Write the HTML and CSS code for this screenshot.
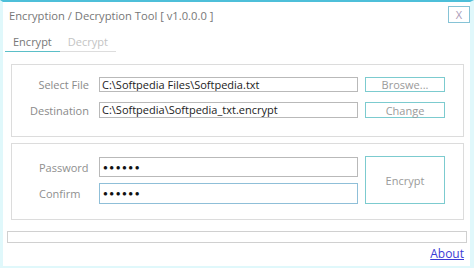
FILE: index.html
```html
<!DOCTYPE html>
<html lang="en">
<head>
  <meta charset="UTF-8">
  <title>Encryption / Decryption Tool</title>
  <link rel="stylesheet" href="styles.css">
</head>
<body>

<div class="window">

  <!-- Title Bar -->
  <div class="titlebar">
    <span class="title">Encryption / Decryption Tool [ v1.0.0.0 ]</span>
    <button class="close">X</button>
  </div>

  <!-- Tabs -->
  <div class="tabs">
    <span class="tab active">Encrypt</span>
    <span class="tab">Decrypt</span>
  </div>

  <!-- File Group -->
  <div class="group files">
    <label class="label">Select File</label>
    <div class="field">C:\Softpedia Files\Softpedia.txt</div>
    <button class="btn">Broswe...</button>

    <label class="label">Destination</label>
    <div class="field">C:\Softpedia\Softpedia_txt.encrypt</div>
    <button class="btn">Change</button>
  </div>

  <!-- Password Group -->
  <div class="group secret">
    <label class="label">Password</label>
    <div class="field dots">&#9679;&#9679;&#9679;&#9679;&#9679;&#9679;</div>
    <button class="btn big">Encrypt</button>

    <label class="label">Confirm</label>
    <div class="field dots focus">&#9679;&#9679;&#9679;&#9679;&#9679;&#9679;</div>
  </div>

  <!-- Progress -->
  <div class="progress"></div>

  <div class="footer">
    <a href="#" class="about">About</a>
  </div>

</div>

</body>
</html>
```

FILE: styles.css
```css
* {
  box-sizing: border-box;
}
body {
  margin: 0;
  font-family: "Open Sans", "Noto Sans", sans-serif;
  background-color: #fff;
}

/* Window frame */
.window {
  width: 474px;
  height: 268px;
  background: #fff;
  border-top: 2px solid #4dbfd9;
  border-left: 3px solid #e0f8fb;
  border-right: 4px solid #e0f8fb;
  border-bottom: 2px solid #e0f8fb;
}

/* Title Bar */
.titlebar {
  display: flex;
  justify-content: space-between;
  align-items: flex-start;
  padding-left: 6px;
  margin-top: 4px;
  height: 17px;
}
.title {
  font-size: 11.2px;
  color: #777;
  line-height: 16px;
  padding-top: 2px;
}
.close {
  width: 22px;
  height: 17px;
  padding: 0;
  margin: 0;
  border: 1px solid #86c3d6;
  background: #fff;
  color: #a99bb8;
  font-family: "Open Sans", sans-serif;
  font-size: 11px;
  line-height: 14px;
}

/* Tabs */
.tabs {
  display: flex;
  margin: 12px 0 0 2px;
}
.tab {
  padding: 0 8px 2px;
  font-size: 11px;
  line-height: 14px;
  color: #c4c4c4;
  border-bottom: 1px solid #ddd;
}
.tab.active {
  color: #777;
  border-bottom: 1px solid #5bbfc8;
}

/* Group boxes */
.group {
  display: grid;
  grid-template-columns: 69px 259px 80px;
  column-gap: 7px;
  margin-left: 8px;
  width: 453px;
  border: 1px solid #dcdcdc;
}
.files {
  margin-top: 12px;
  height: 73px;
  padding: 12px 0 0 11px;
  row-gap: 10px;
  grid-template-rows: 15px 16px;
}
.secret {
  margin-top: 6px;
  height: 77px;
  padding: 13px 0 0 27px;
  row-gap: 6px;
  grid-template-columns: 53px 259px 80px;
  grid-template-rows: 20px 21px;
}

.label {
  font-size: 11px;
  color: #8a8a8a;
  line-height: 15px;
  text-align: right;
  padding-right: 3px;
  align-self: center;
}
.secret .label {
  text-align: left;
  color: #8f8f8f;
}

.field {
  border: 1px solid #b9b9b9;
  font-size: 11px;
  line-height: 14px;
  color: #222;
  padding-left: 2px;
  white-space: nowrap;
  overflow: hidden;
}
.field.dots {
  font-size: 8px;
  line-height: 18px;
  letter-spacing: 1.5px;
  padding-left: 3px;
  color: #111;
}
.field.focus {
  border-color: #8fbfd8;
}

.btn {
  border: 1px solid #7ccbcf;
  background: #fff;
  color: #9a9a9a;
  font-family: "Open Sans", sans-serif;
  font-size: 11px;
  padding: 0;
  line-height: 13px;
}
.btn.big {
  grid-row: 1 / 3;
  grid-column: 3;
  height: 48px;
  margin-top: -1px;
}

/* Progress bar */
.progress {
  margin: 11px 0 0 4px;
  width: 460px;
  height: 12px;
  border: 1px solid #d0d0d0;
}

/* Footer */
.footer {
  display: flex;
  justify-content: flex-end;
  padding-right: 6px;
  margin-top: 3px;
}
.about {
  font-size: 12px;
  color: #3b3bd6;
  line-height: 16px;
}
```
